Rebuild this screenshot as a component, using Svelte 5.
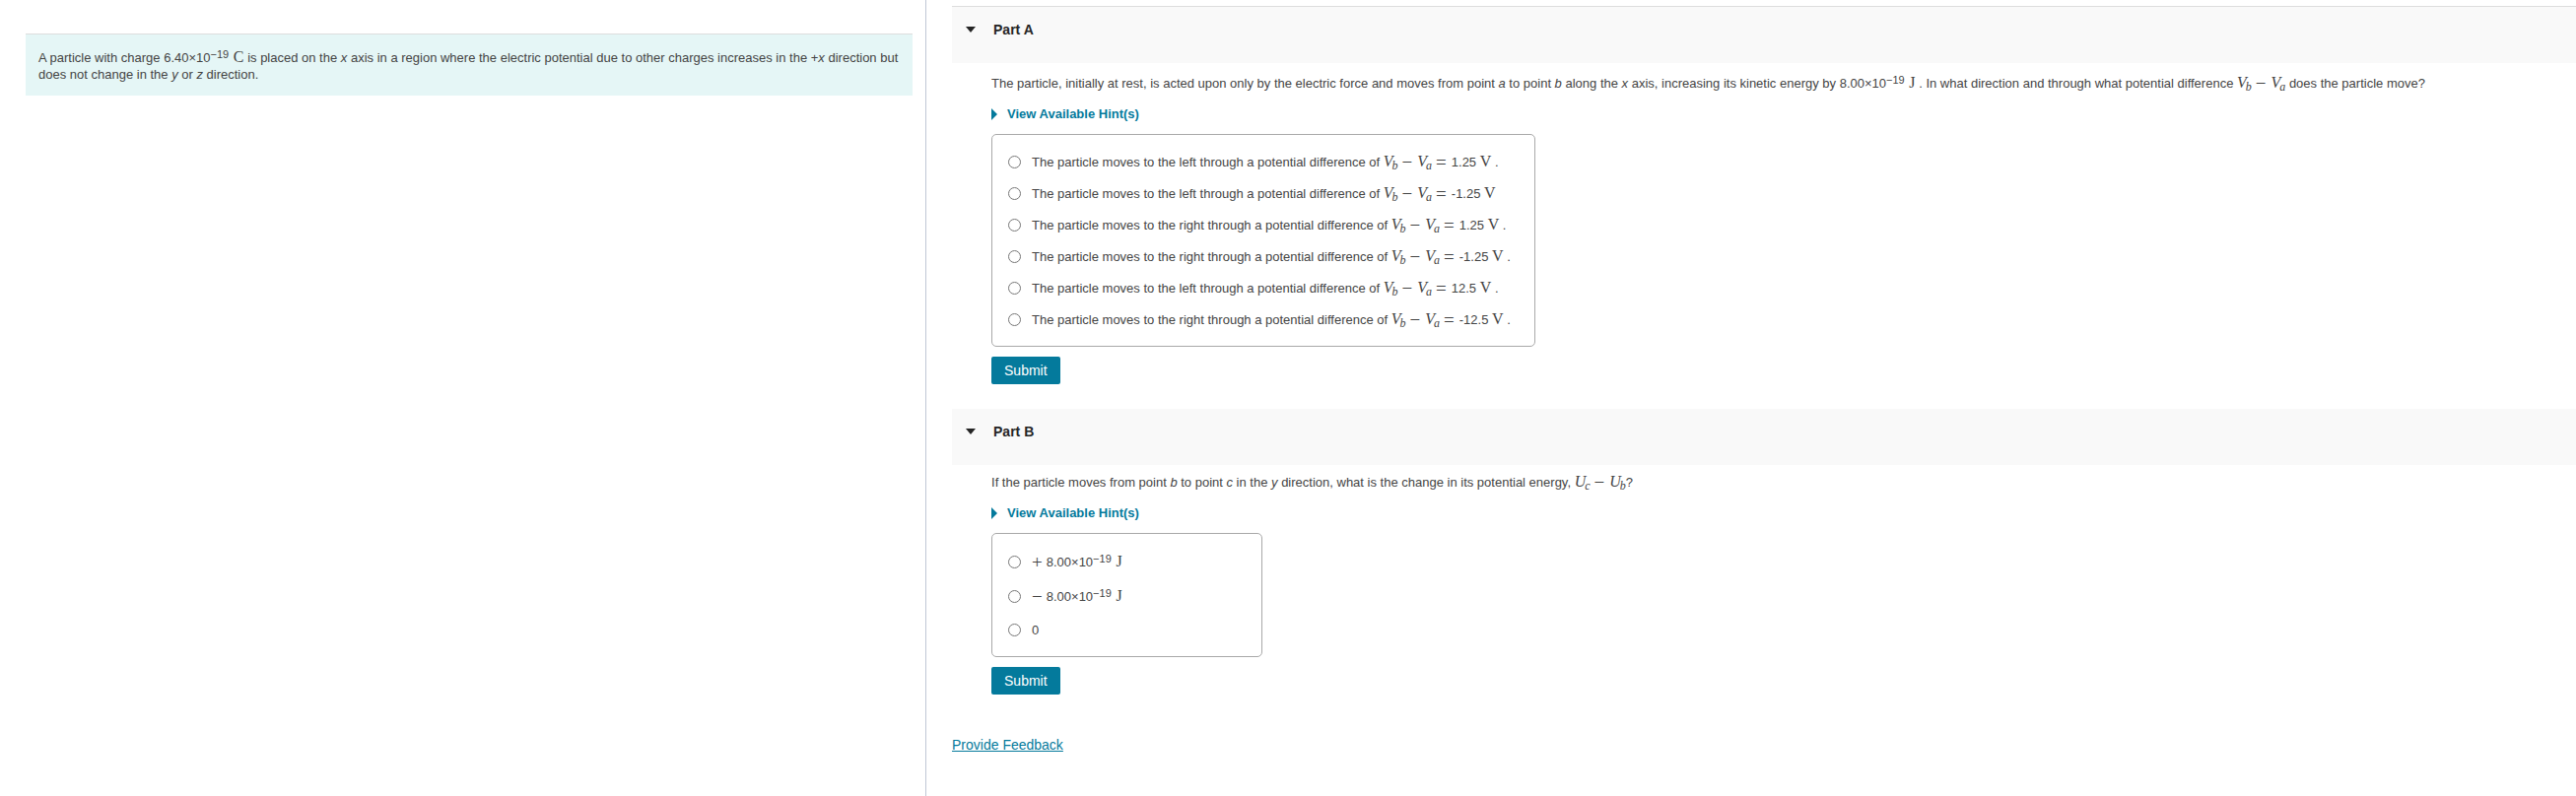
<script lang="ts">
  const choicesA = [
    { direction: "left", value: "1.25", end: " ." },
    { direction: "left", value: "-1.25", end: "" },
    { direction: "right", value: "1.25", end: " ." },
    { direction: "right", value: "-1.25", end: " ." },
    { direction: "left", value: "12.5", end: " ." },
    { direction: "right", value: "-12.5", end: " ." },
  ];

  let openA = $state(true);
  let openB = $state(true);
  let answerA = $state("");
  let answerB = $state("");
</script>

{#snippet difference(symbol: string, first: string, second: string)}
  <span class="math"><i>{symbol}</i><sub>{first}</sub><span class="op">−</span><i>{symbol}</i><sub>{second}</sub></span>
{/snippet}

{#snippet quantity(value: string, unit: string)}
  <span class="quantity">{value}×10<sup>−19</sup> <span class="unit">{unit}</span></span>
{/snippet}

{#snippet hints()}
  <button class="hints" type="button">
    <svg width="6" height="12" viewBox="0 0 6 12" aria-hidden="true"><path d="M0 0L6 6L0 12Z" /></svg>
    View Available Hint(s)
  </button>
{/snippet}

{#snippet heading(title: string)}
  <svg width="10" height="6" viewBox="0 0 10 6" aria-hidden="true"><path d="M0 0H10L5 6Z" /></svg>
  {title}
{/snippet}

<div class="page">
  <aside>
    <p class="intro">
      A particle with charge {@render quantity("6.40", "C")} is placed on the <i>x</i> axis in a region where the electric potential due to other charges increases in the +<i>x</i> direction but does not change in the <i>y</i> or <i>z</i> direction.
    </p>
  </aside>

  <main>
    <section>
      <h2 class="first">
        <button type="button" aria-expanded={openA} onclick={() => (openA = !openA)}>{@render heading("Part A")}</button>
      </h2>
      {#if openA}
        <form class="body first" onsubmit={(e) => e.preventDefault()}>
          <p>
            The particle, initially at rest, is acted upon only by the electric force and moves from point <i>a</i> to point <i>b</i> along the <i>x</i> axis, increasing its kinetic energy by {@render quantity("8.00", "J")} . In what direction and through what potential difference {@render difference("V", "b", "a")} does the particle move?
          </p>
          {@render hints()}
          <div class="choices">
            {#each choicesA as choice, i}
              <label>
                <input type="radio" name="part-a" value={String(i)} bind:group={answerA} />
                <span>The particle moves to the {choice.direction} through a potential difference of {@render difference("V", "b", "a")}<span class="equals">=</span>{choice.value} <span class="unit">V</span>{choice.end}</span>
              </label>
            {/each}
          </div>
          <button class="submit" type="submit">Submit</button>
        </form>
      {/if}
    </section>

    <section>
      <h2>
        <button type="button" aria-expanded={openB} onclick={() => (openB = !openB)}>{@render heading("Part B")}</button>
      </h2>
      {#if openB}
        <form class="body" onsubmit={(e) => e.preventDefault()}>
          <p>
            If the particle moves from point <i>b</i> to point <i>c</i> in the <i>y</i> direction, what is the change in its potential energy, {@render difference("U", "c", "b")}?
          </p>
          {@render hints()}
          <div class="choices">
            {#each ["+", "−"] as sign}
              <label class="tall">
                <input type="radio" name="part-b" value={sign} bind:group={answerB} />
                <span><span class="sign">{sign}</span>{@render quantity("8.00", "J")}</span>
              </label>
            {/each}
            <label>
              <input type="radio" name="part-b" value="0" bind:group={answerB} />
              <span>0</span>
            </label>
          </div>
          <button class="submit" type="submit">Submit</button>
        </form>
      {/if}
    </section>

    <a class="feedback" href="#feedback">Provide Feedback</a>
  </main>
</div>

<style>
  :global(body) {
    background: #fff;
  }

  .page {
    display: flex;
    min-height: 100vh;
    font-family: "Liberation Sans", Arial, sans-serif;
    font-size: 13px;
    line-height: 17px;
    color: #444;
  }

  aside {
    box-sizing: border-box;
    width: calc(36% - 1px);
    flex: none;
    padding: 34px 13px 0 26px;
    border-right: 1px solid #c0c8d6;
  }

  p {
    margin: 0;
  }

  .intro {
    padding: 15px 13px 13px;
    background: #e5f6f6;
    border-top: 1px solid #ddd;
  }

  main {
    flex: 1;
    min-width: 0;
    padding: 6px 0 20px 26px;
  }

  h2 {
    height: 43px;
    margin: 0;
    padding: 14px 14px 0;
    background: #f9f9f9;
    font-size: 14px;
  }

  h2.first {
    border-top: 1px solid #ddd;
  }

  button {
    font-family: inherit;
    border: none;
    cursor: pointer;
  }

  h2 button {
    display: flex;
    align-items: center;
    gap: 18px;
    padding: 0;
    background: none;
    font-size: 14px;
    font-weight: bold;
    line-height: 18px;
    color: #252525;
  }

  svg {
    flex: none;
    fill: currentColor;
  }

  .body {
    padding: 9px 0 25px 40px;
  }

  .body.first {
    padding-top: 12px;
  }

  .hints {
    display: flex;
    align-items: center;
    gap: 10px;
    margin: 14px 0 12px;
    padding: 0;
    background: none;
    font-size: 13px;
    font-weight: bold;
    line-height: 17px;
    color: #047a9c;
  }

  .choices {
    box-sizing: border-box;
    width: fit-content;
    min-width: 275px;
    padding: 11px 24px 11px 16px;
    border: 1px solid #a9a9a9;
    border-radius: 5px;
  }

  label {
    display: flex;
    align-items: center;
    gap: 11px;
    height: 32px;
  }

  label.tall {
    height: 35px;
  }

  input {
    flex: none;
    width: 13px;
    height: 13px;
    margin: 0;
  }

  .math,
  .unit,
  .sign,
  .equals {
    font-family: "Liberation Serif", "Times New Roman", serif;
    font-size: 16px;
    line-height: 1px;
  }

  .math,
  .quantity {
    white-space: nowrap;
  }

  .quantity .unit {
    margin-left: 1px;
  }

  sub,
  sup {
    line-height: 1px;
    vertical-align: baseline;
    position: relative;
  }

  sub {
    top: 3px;
    margin-left: -1px;
    font-size: 12px;
    font-style: italic;
  }

  sup {
    top: -4px;
    font-size: 11px;
  }

  .op,
  .equals,
  .sign {
    position: relative;
    top: 2px;
    font-size: 19px;
  }

  .op,
  .equals {
    margin: 0 5px 0 4px;
  }

  .sign {
    margin-right: 4px;
  }

  .submit {
    display: block;
    height: 28px;
    margin-top: 10px;
    padding: 0 13px;
    background: #047a9c;
    border-radius: 2px;
    font-size: 14px;
    color: #fff;
  }

  .feedback {
    display: inline-block;
    margin-top: 18px;
    font-size: 14px;
    color: #047a9c;
  }
</style>
